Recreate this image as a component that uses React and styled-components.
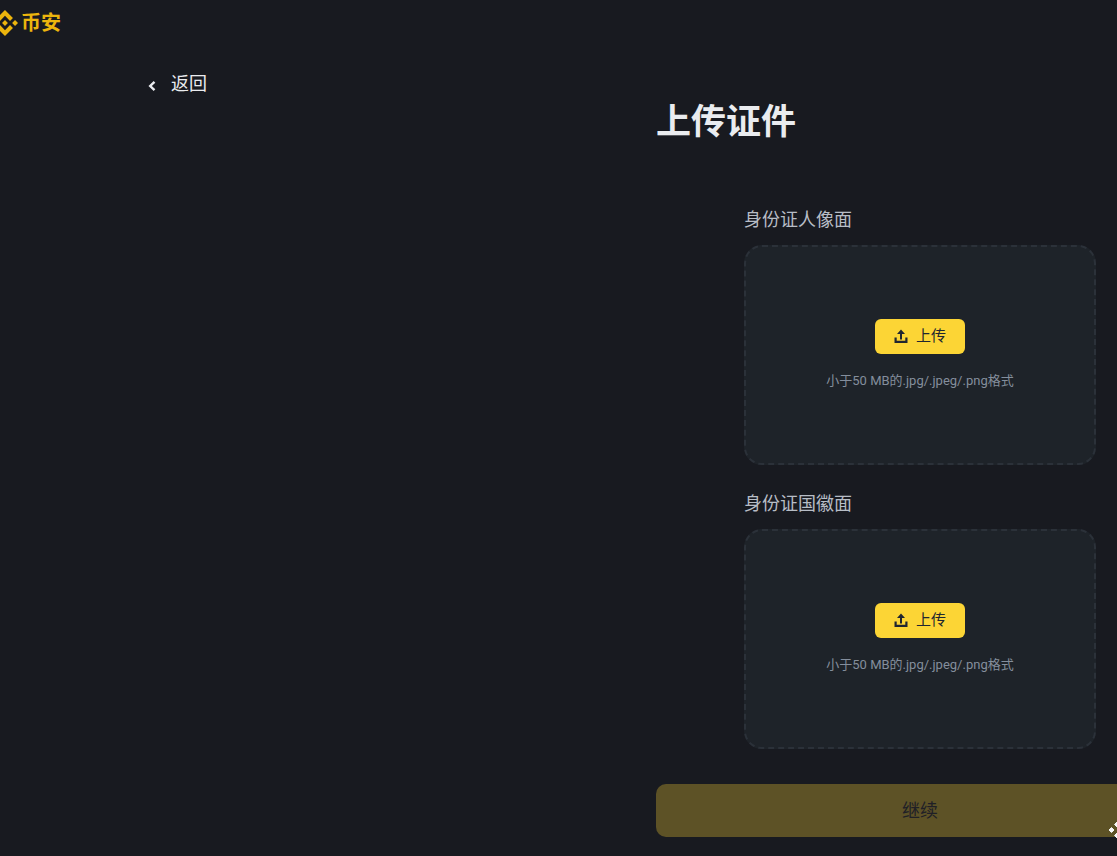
import React from 'react'
import styled, { createGlobalStyle } from 'styled-components'
import { SiBinance } from 'react-icons/si'

const documents = [
    { id: "front", label: "身份证人像面" },
    { id: "back", label: "身份证国徽面" },
]

const BackIcon = () => (
    <svg width="8" height="16" viewBox="0 0 8 16" fill="none" stroke="#eaecef" strokeWidth="2.4" aria-hidden="true">
        <path d="M6.5 5.8L2.2 10l4.3 4.2" />
    </svg>
)

const UploadIcon = () => (
    <svg width="14" height="16" viewBox="0 0 14 16" fill="#202630" aria-hidden="true">
        <path d="M7 1.5L11 6H8V11.5H6V6H3z" />
        <path d="M0.5 9.5H2.7V12.8H11.3V9.5H13.5V15H0.5z" />
    </svg>
)

const UploadBox = ({ id, label }) => (
    <Field role="group" aria-labelledby={id}>
        <Label id={id}>{label}</Label>
        <DropZone>
            <UploadButton type="button">
                <UploadIcon />
                上传
            </UploadButton>
            <Hint>小于50 MB的.jpg/.jpeg/.png格式</Hint>
        </DropZone>
    </Field>
)

const App = () => {
    return (
        <Page>
            <GlobalStyle />
            <Header>
                <Logo href="#">
                    <SiBinance size={26} aria-hidden="true" />
                    币安
                </Logo>
            </Header>
            <Main>
                <Back href="#">
                    <BackIcon />
                    返回
                </Back>
                <Form>
                    <Title>上传证件</Title>
                    <Fields>
                        {documents.map((doc) => (
                            <UploadBox key={doc.id} {...doc} />
                        ))}
                    </Fields>
                    <Continue type="button" disabled>继续</Continue>
                </Form>
            </Main>
            <Corner width="9" height="20" viewBox="0 0 9 20" aria-hidden="true">
                <path d="M3.5 7.5L6 10L3.5 12.5L1 10z" />
                <path d="M9 2L11.5 4.5L9 7L6.5 4.5z" />
                <path d="M9 13L11.5 15.5L9 18L6.5 15.5z" />
            </Corner>
        </Page>
    )
}

export default App

const GlobalStyle = createGlobalStyle`
    * {
        box-sizing: border-box;
    }
    body {
        margin: 0;
        background: #181a20;
        color: #eaecef;
        font-family: Roboto, "Noto Sans CJK SC", sans-serif;
    }
    button {
        font-family: inherit;
    }
`
const Page = styled.div`
    min-height: 100vh;
    overflow: hidden;
`
const Header = styled.header`
    display: flex;
    align-items: center;
    height: 46px;
`
const Logo = styled.a`
    display: flex;
    align-items: center;
    gap: 3px;
    margin-left: -8px;
    color: #ecb50d;
    font-size: 20px;
    font-weight: 700;
    line-height: 30px;
    text-decoration: none;
`
const Main = styled.main`
    display: grid;
    grid-template-columns: minmax(160px, 1fr) 461px;
    align-items: start;
    padding: 24px 0 19px 148px;
`
const Back = styled.a`
    display: flex;
    align-items: center;
    gap: 15px;
    color: #eaecef;
    font-size: 18px;
    line-height: 28px;
    text-decoration: none;
`
const Form = styled.form`
    display: flex;
    flex-direction: column;
    width: 528px;
    padding-top: 29px;
`
const Title = styled.h1`
    margin: 0 0 59px;
    font-size: 35px;
    font-weight: 700;
    line-height: 48px;
`
const Fields = styled.div`
    display: flex;
    flex-direction: column;
    align-items: center;
    gap: 25px;
`
const Field = styled.div`
    width: 352px;
`
const Label = styled.div`
    margin-bottom: 11px;
    color: #b7bdc6;
    font-size: 18px;
    line-height: 28px;
`
const DropZone = styled.div`
    display: flex;
    flex-direction: column;
    align-items: center;
    justify-content: center;
    gap: 18px;
    height: 220px;
    padding-bottom: 1px;
    border: 2px dashed #2b3139;
    border-radius: 18px;
    background: #1e2329;
`
const UploadButton = styled.button`
    display: flex;
    align-items: center;
    justify-content: center;
    gap: 8px;
    width: 90px;
    height: 35px;
    padding: 0 0 2px;
    border: none;
    border-radius: 6px;
    background: #fcd535;
    color: #202630;
    font-size: 15px;
    line-height: 22px;
    cursor: pointer;
`
const Hint = styled.p`
    margin: 0;
    color: #848e9c;
    font-size: 13px;
    line-height: 18px;
`
const Continue = styled.button`
    height: 53px;
    margin-top: 35px;
    padding: 0 0 3px;
    border: none;
    border-radius: 10px;
    background: #5d5226;
    color: #202026;
    font-size: 18px;
`
const Corner = styled.svg`
    position: fixed;
    right: 0;
    bottom: 16px;
    fill: #f5f5f5;
    stroke: #f5f5f5;
    stroke-width: 1;
    stroke-linejoin: round;
`
